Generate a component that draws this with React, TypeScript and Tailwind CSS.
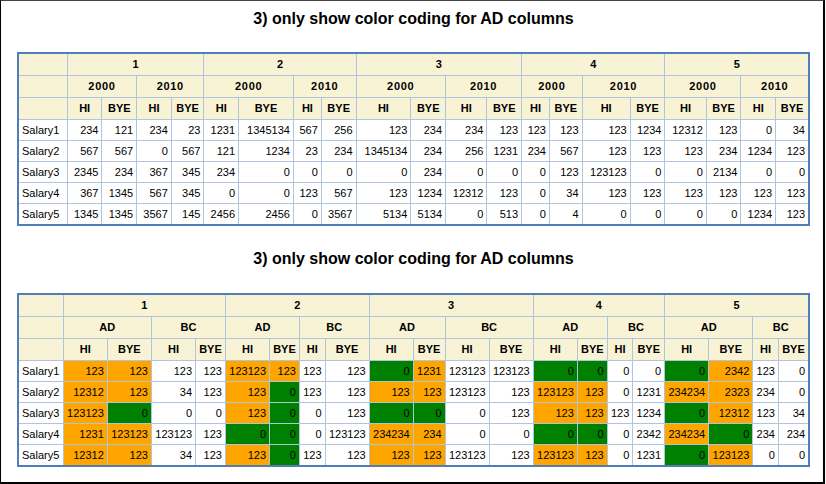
import React from "react";

type Row = { label: string; values: number[] };

const T1: Row[] = [
  { label: "Salary1", values: [234, 121, 234, 23, 1231, 1345134, 567, 256, 123, 234, 234, 123, 123, 123, 123, 1234, 12312, 123, 0, 34] },
  { label: "Salary2", values: [567, 567, 0, 567, 121, 1234, 23, 234, 1345134, 234, 256, 1231, 234, 567, 123, 123, 123, 234, 1234, 123] },
  { label: "Salary3", values: [2345, 234, 367, 345, 234, 0, 0, 0, 0, 234, 0, 0, 0, 123, 123123, 0, 0, 2134, 0, 0] },
  { label: "Salary4", values: [367, 1345, 567, 345, 0, 0, 123, 567, 123, 1234, 12312, 123, 0, 34, 123, 123, 123, 123, 123, 123] },
  { label: "Salary5", values: [1345, 1345, 3567, 145, 2456, 2456, 0, 3567, 5134, 5134, 0, 513, 0, 4, 0, 0, 0, 0, 1234, 123] },
];

const T2: Row[] = [
  { label: "Salary1", values: [123, 123, 123, 123, 123123, 123, 123, 123, 0, 1231, 123123, 123123, 0, 0, 0, 0, 0, 2342, 123, 0] },
  { label: "Salary2", values: [12312, 123, 34, 123, 123, 0, 123, 123, 123, 123, 123123, 123, 123123, 123, 0, 1231, 234234, 2323, 234, 0] },
  { label: "Salary3", values: [123123, 0, 0, 0, 123, 0, 0, 123, 0, 0, 0, 123, 123, 123, 123, 1234, 0, 12312, 123, 34] },
  { label: "Salary4", values: [1231, 123123, 123123, 123, 0, 0, 0, 123123, 234234, 234, 0, 0, 0, 0, 0, 2342, 234234, 0, 234, 234] },
  { label: "Salary5", values: [12312, 123, 34, 123, 123, 0, 123, 123, 123, 123, 123123, 123, 123123, 123, 0, 1231, 0, 123123, 0, 0] },
];

const HEAD =
  "border border-[#b0c4de] bg-[#f9f3d5] px-[3px] py-[3px] text-center font-bold text-[11px] leading-[15px] text-black whitespace-nowrap";
const HEAD_NUM =
  "border border-[#b0c4de] bg-[#f9f3d5] px-[3px] py-[3px] text-center font-bold text-[11px] leading-[15px] tracking-[0.7px] text-black whitespace-nowrap";
const STUB_HEAD = "border border-[#b0c4de] bg-[#f9f3d5] px-[3px] py-[3px] text-[11px] leading-[15px]";
const ROWHEAD =
  "border border-[#b0c4de] bg-white px-[3px] py-[3px] text-left font-normal text-[11px] leading-[14px] text-black whitespace-nowrap";
const DATA_WHITE =
  "border border-[#b0c4de] bg-white px-[3px] py-[3px] text-right text-[11px] leading-[14px] text-black whitespace-nowrap";
const DATA_ORANGE =
  "border border-[#b0c4de] bg-[#ffa500] px-[3px] py-[3px] text-right text-[11px] leading-[14px] text-black whitespace-nowrap";
const DATA_GREEN =
  "border border-[#b0c4de] bg-[#008000] px-[3px] py-[3px] text-right text-[11px] leading-[14px] text-black whitespace-nowrap";

function DataTable({
  sub,
  subNumeric,
  rows,
  colored,
}: {
  sub: [string, string];
  subNumeric: boolean;
  rows: Row[];
  colored: boolean;
}) {
  const groups = ["1", "2", "3", "4", "5"];
  const subCls = subNumeric ? HEAD_NUM : HEAD;
  return (
    <table className="border-collapse border-2 border-[#4f7ebb] w-[793px]">
      <thead>
        <tr>
          <th className={STUB_HEAD}></th>
          {groups.map((g) => (
            <th key={g} colSpan={4} className={HEAD}>
              {g}
            </th>
          ))}
        </tr>
        <tr>
          <th className={STUB_HEAD}></th>
          {groups.map((g) => (
            <React.Fragment key={g}>
              <th colSpan={2} className={subCls}>
                {sub[0]}
              </th>
              <th colSpan={2} className={subCls}>
                {sub[1]}
              </th>
            </React.Fragment>
          ))}
        </tr>
        <tr>
          <th className={STUB_HEAD}></th>
          {groups.map((g) => (
            <React.Fragment key={g}>
              <th className={HEAD}>HI</th>
              <th className={HEAD}>BYE</th>
              <th className={HEAD}>HI</th>
              <th className={HEAD}>BYE</th>
            </React.Fragment>
          ))}
        </tr>
      </thead>
      <tbody>
        {rows.map((r) => (
          <tr key={r.label}>
            <th className={ROWHEAD}>{r.label}</th>
            {r.values.map((v, i) => {
              const isAD = colored && i % 4 < 2;
              const cls = isAD ? (v === 0 ? DATA_GREEN : DATA_ORANGE) : DATA_WHITE;
              return (
                <td key={i} className={cls}>
                  {v}
                </td>
              );
            })}
          </tr>
        ))}
      </tbody>
    </table>
  );
}

export default function App() {
  return (
    <div className="w-[825px] h-[484px] bg-white border-l border-t border-r-2 border-b-2 border-l-black border-t-[#444444] border-r-black border-b-black font-['Liberation_Sans',Arial,sans-serif] text-black overflow-hidden">
      <div className="flex flex-col pt-[9px] pl-[16px]">
        <div className="w-[793px] text-center font-bold text-[16px] leading-[18px] mb-[24px]">
          3) only show color coding for AD columns
        </div>
        <DataTable sub={["2000", "2010"]} subNumeric={true} rows={T1} colored={false} />
        <div className="w-[793px] text-center font-bold text-[16px] leading-[18px] mt-[24px] mb-[25px]">
          3) only show color coding for AD columns
        </div>
        <DataTable sub={["AD", "BC"]} subNumeric={false} rows={T2} colored={true} />
      </div>
    </div>
  );
}
